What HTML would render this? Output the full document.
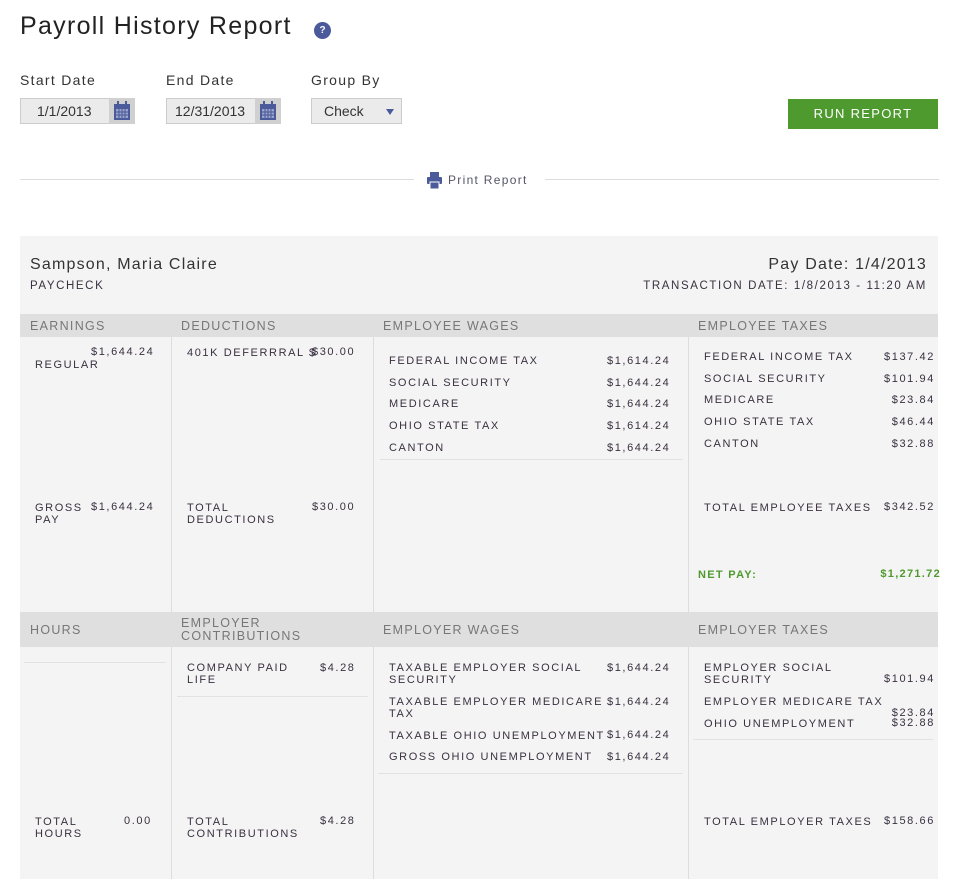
<!DOCTYPE html>
<html><head><meta charset="utf-8"><style>
body{margin:0;width:955px;height:879px;background:#fff;font-family:"Liberation Sans",sans-serif;color:#333;position:relative;overflow:hidden}
.a{position:absolute;white-space:nowrap}
.s{font-size:11px;letter-spacing:1.6px;color:#3a3040;line-height:12px}
.h{font-size:12.5px;letter-spacing:1.3px;color:#777}
.lab{font-size:14px;letter-spacing:1.3px;color:#333}
.inp{position:absolute;height:26px;background:#ebebeb;border:1px solid #ccc;box-sizing:border-box;font-size:14px;line-height:24px}
.vl{position:absolute;width:1px;background:#ddd}
.hl{position:absolute;height:1px;background:#e2e2e2}
.r{text-align:right}
</style></head><body>
<div class="a" style="left:20px;top:12px;font-size:25px;letter-spacing:1.3px;color:#222">Payroll History Report</div>
<div class="a" style="left:314px;top:22px;width:17px;height:17px;border-radius:50%;background:#4a5a9a;color:#fff;font-size:10px;font-weight:bold;text-align:center;line-height:17px">?</div>
<div class="a lab" style="left:20px;top:72px">Start Date</div>
<div class="a lab" style="left:166px;top:72px">End Date</div>
<div class="a lab" style="left:311px;top:72px">Group By</div>
<div class="inp" style="left:20px;top:98px;width:115px;padding-left:16px">1/1/2013</div>
<div class="a" style="left:109px;top:98px;width:26px;height:26px;background:#d0d0d0"></div>
<svg class="a" style="left:113px;top:101px" width="18" height="20" viewBox="0 0 18 20"><rect x="1" y="3" width="16" height="16" fill="#4a5a9a"/><rect x="4" y="0" width="2" height="5" fill="#4a5a9a"/><rect x="12" y="0" width="2" height="5" fill="#4a5a9a"/><g fill="#9aa3c8"><rect x="3" y="8" width="12" height="9"/></g><g stroke="#4a5a9a" stroke-width="1"><path d="M6 8v9M9 8v9M12 8v9M3 11h12M3 14h12"/></g></svg>
<div class="inp" style="left:166px;top:98px;width:115px;padding-left:8px">12/31/2013</div>
<div class="a" style="left:255px;top:98px;width:26px;height:26px;background:#d0d0d0"></div>
<svg class="a" style="left:259px;top:101px" width="18" height="20" viewBox="0 0 18 20"><rect x="1" y="3" width="16" height="16" fill="#4a5a9a"/><rect x="4" y="0" width="2" height="5" fill="#4a5a9a"/><rect x="12" y="0" width="2" height="5" fill="#4a5a9a"/><g fill="#9aa3c8"><rect x="3" y="8" width="12" height="9"/></g><g stroke="#4a5a9a" stroke-width="1"><path d="M6 8v9M9 8v9M12 8v9M3 11h12M3 14h12"/></g></svg>
<div class="inp" style="left:311px;top:98px;width:91px;padding-left:12px">Check</div>
<div class="a" style="left:386px;top:109px;width:0;height:0;border-left:4px solid transparent;border-right:4px solid transparent;border-top:6px solid #4a5a9a"></div>
<div class="a" style="left:788px;top:99px;width:150px;height:30px;background:#4f9a2e;color:#fff;font-size:13px;letter-spacing:1.3px;text-align:center;line-height:30px">RUN REPORT</div>
<div class="hl" style="left:20px;top:179px;width:394px;background:#ddd"></div>
<div class="hl" style="left:545px;top:179px;width:394px;background:#ddd"></div>
<svg class="a" style="left:427px;top:172px" width="15" height="17" viewBox="0 0 15 17"><rect x="3" y="0" width="9" height="5" fill="#4a5a9a"/><rect x="0" y="5" width="15" height="7" rx="1" fill="#4a5a9a"/><rect x="3" y="10" width="9" height="7" fill="#4a5a9a" stroke="#fff" stroke-width="1"/></svg>
<div class="a" style="left:448px;top:173px;font-size:12px;letter-spacing:1.3px;color:#556">Print Report</div>

<div class="a" style="left:20px;top:236px;width:918px;height:643px;background:#f4f4f4"></div>
<div class="a" style="left:30px;top:256px;font-size:16px;letter-spacing:1.2px;color:#333">Sampson, Maria Claire</div>
<div class="a s" style="left:30px;top:280px;font-size:11.5px">PAYCHECK</div>
<div class="a r" style="right:28px;top:256px;font-size:16px;letter-spacing:1.2px;color:#333">Pay Date: 1/4/2013</div>
<div class="a s" style="right:28px;top:280px;font-size:11.5px">TRANSACTION DATE: 1/8/2013 - 11:20 AM</div>

<div class="a" style="left:20px;top:314px;width:918px;height:23px;background:#dfdfdf"></div>
<div class="a" style="left:20px;top:612px;width:918px;height:35px;background:#dfdfdf"></div>
<div class="vl" style="left:171px;top:337px;height:275px"></div>
<div class="vl" style="left:373px;top:337px;height:275px"></div>
<div class="vl" style="left:688px;top:337px;height:275px"></div>
<div class="vl" style="left:171px;top:647px;height:232px"></div>
<div class="vl" style="left:373px;top:647px;height:232px"></div>
<div class="vl" style="left:688px;top:647px;height:232px"></div>

<div class="a h" style="left:30px;top:319px">EARNINGS</div>
<div class="a h" style="left:181px;top:319px">DEDUCTIONS</div>
<div class="a h" style="left:383px;top:319px">EMPLOYEE WAGES</div>
<div class="a h" style="left:698px;top:319px">EMPLOYEE TAXES</div>
<div class="a h" style="left:30px;top:623px">HOURS</div>
<div class="a h" style="left:181px;top:617px;line-height:13px">EMPLOYER<br>CONTRIBUTIONS</div>
<div class="a h" style="left:383px;top:623px">EMPLOYER WAGES</div>
<div class="a h" style="left:698px;top:623px">EMPLOYER TAXES</div>

<div class="a s" style="left:91px;top:346px">$1,644.24</div>
<div class="a s" style="left:35px;top:359px">REGULAR</div>
<div class="a s" style="left:35px;top:502px">GROSS<br>PAY</div>
<div class="a s" style="left:91px;top:501px">$1,644.24</div>
<div class="a s" style="left:187px;top:347px">401K DEFERRRAL $</div>
<div class="a s" style="left:312px;top:346px">$30.00</div>
<div class="a s" style="left:187px;top:502px">TOTAL<br>DEDUCTIONS</div>
<div class="a s" style="left:312px;top:501px">$30.00</div>

<div class="a s" style="left:389px;top:351px;line-height:21.7px">FEDERAL INCOME TAX<br>SOCIAL SECURITY<br>MEDICARE<br>OHIO STATE TAX<br>CANTON</div>
<div class="a s" style="left:607px;top:351px;line-height:21.7px">$1,614.24<br>$1,644.24<br>$1,644.24<br>$1,614.24<br>$1,644.24</div>
<div class="hl" style="left:380px;top:459px;width:303px"></div>

<div class="a s" style="left:704px;top:347px;line-height:21.7px">FEDERAL INCOME TAX<br>SOCIAL SECURITY<br>MEDICARE<br>OHIO STATE TAX<br>CANTON</div>
<div class="a s r" style="right:20px;top:347px;line-height:21.7px">$137.42<br>$101.94<br>$23.84<br>$46.44<br>$32.88</div>
<div class="a s" style="left:704px;top:502px">TOTAL EMPLOYEE TAXES</div>
<div class="a s r" style="right:20px;top:501px">$342.52</div>
<div class="a s" style="left:698px;top:569px;color:#4f9a2e;font-weight:bold;letter-spacing:1.3px">NET PAY:</div>
<div class="a s r" style="right:14px;top:568px;color:#4f9a2e;font-weight:bold;letter-spacing:1.3px">$1,271.72</div>

<div class="hl" style="left:24px;top:662px;width:142px"></div>
<div class="a s" style="left:35px;top:816px">TOTAL<br>HOURS</div>
<div class="a s" style="left:124px;top:815px">0.00</div>
<div class="a s" style="left:187px;top:662px">COMPANY PAID<br>LIFE</div>
<div class="a s" style="left:320px;top:662px">$4.28</div>
<div class="hl" style="left:177px;top:696px;width:191px"></div>
<div class="a s" style="left:187px;top:816px">TOTAL<br>CONTRIBUTIONS</div>
<div class="a s" style="left:320px;top:815px">$4.28</div>

<div class="a s" style="left:389px;top:662px">TAXABLE EMPLOYER SOCIAL<br>SECURITY</div>
<div class="a s" style="left:389px;top:696px">TAXABLE EMPLOYER MEDICARE<br>TAX</div>
<div class="a s" style="left:389px;top:730px">TAXABLE OHIO UNEMPLOYMENT</div>
<div class="a s" style="left:389px;top:751px">GROSS OHIO UNEMPLOYMENT</div>
<div class="a s" style="left:607px;top:662px;line-height:12px">$1,644.24</div>
<div class="a s" style="left:607px;top:696px">$1,644.24</div>
<div class="a s" style="left:607px;top:729px">$1,644.24</div>
<div class="a s" style="left:607px;top:751px">$1,644.24</div>
<div class="hl" style="left:378px;top:773px;width:305px"></div>

<div class="a s" style="left:704px;top:662px">EMPLOYER SOCIAL<br>SECURITY</div>
<div class="a s" style="left:704px;top:696px">EMPLOYER MEDICARE TAX</div>
<div class="a s" style="left:704px;top:718px">OHIO UNEMPLOYMENT</div>
<div class="a s r" style="right:20px;top:662px;line-height:34px">$101.94<br>$23.84</div>
<div class="a s r" style="right:20px;top:717px">$32.88</div>
<div class="hl" style="left:693px;top:739px;width:240px"></div>
<div class="a s" style="left:704px;top:816px">TOTAL EMPLOYER TAXES</div>
<div class="a s r" style="right:20px;top:815px">$158.66</div>
</body></html>
